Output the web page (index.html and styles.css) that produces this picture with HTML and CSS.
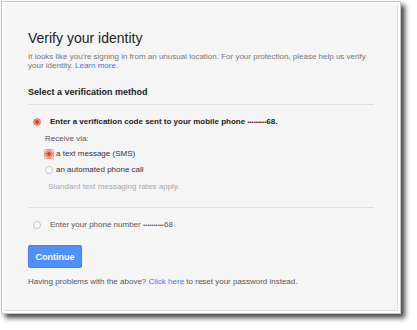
FILE: index.html
```html
<!DOCTYPE html>
<html>
<head>
<meta charset="utf-8">
<link rel="stylesheet" href="styles.css">
</head>
<body>
<div class="frame">
  <div class="card">
    <h1 class="title">Verify your identity</h1>
    <p class="intro">It looks like you're signing in from an unusual location. For your protection, please help us verify your identity. <a class="link" href="#">Learn more</a>.</p>
    <h2 class="section">Select a verification method</h2>
    <div class="rule"></div>
    <div class="option">
      <span class="radio checked"></span>
      <span class="opt-label bold">Enter a verification code sent to your mobile phone <span class="dots">•••••••••</span>68.</span>
    </div>
    <div class="sub">
      <div class="receive">Receive via:</div>
      <div class="choice">
        <span class="focus"><span class="radio checked"></span></span>
        <span class="choice-label">a text message (SMS)</span>
      </div>
      <div class="choice">
        <span class="focus plain"><span class="radio"></span></span>
        <span class="choice-label">an automated phone call</span>
      </div>
      <div class="note">Standard text messaging rates apply.</div>
    </div>
    <div class="rule rule2"></div>
    <div class="option option2">
      <span class="radio"></span>
      <span class="opt-label">Enter your phone number <span class="dots">••••••••••</span>68</span>
    </div>
    <button class="btn">Continue</button>
    <p class="help">Having problems with the above? <a class="link" href="#">Click here</a> to reset your password instead.</p>
  </div>
</div>
</body>
</html>
```
FILE: styles.css
```css
html, body {
  margin: 0;
  padding: 0;
  background: #ffffff;
}
body {
  font-family: "Liberation Sans", Arial, sans-serif;
  width: 417px;
  height: 330px;
  overflow: hidden;
}
.frame {
  margin: 1px;
  width: 400px;
  height: 313px;
  box-sizing: border-box;
  border: 1px solid #c4c4c4;
  background: #fcfcfc;
  padding: 2px;
  box-shadow: 4px 4px 5px rgba(0, 0, 0, 0.72);
}
.card {
  box-sizing: border-box;
  height: 100%;
  background: #f5f5f5;
  border-right: 1px solid #dedede;
  border-bottom: 1px solid #dedede;
  padding: 26px 23px 0 24px;
}
.title {
  margin: 0;
  font-size: 14px;
  line-height: 16px;
  font-weight: normal;
  color: #222;
}
.intro {
  margin: 5.5px 0 0;
  font-size: 8px;
  line-height: 9.5px;
  color: #777;
}
.link {
  color: #3b78e7;
  text-decoration: none;
}
.section {
  margin: 16.5px 0 0;
  font-size: 9px;
  line-height: 11px;
  font-weight: bold;
  color: #222;
}
.rule {
  height: 1px;
  background: #e0e0e0;
  margin-top: 6px;
}
.option {
  display: flex;
  align-items: center;
  margin-top: 12px;
  height: 10px;
}
.option .radio {
  margin-left: 5px;
  margin-right: 9px;
}
.opt-label {
  font-size: 8px;
  line-height: 10px;
  color: #555;
}
.opt-label.bold {
  font-weight: bold;
  color: #222;
}
.dots {
  font-size: 6px;
}
.radio {
  display: inline-block;
  box-sizing: border-box;
  width: 8px;
  height: 8px;
  border-radius: 50%;
  border: 1px solid #c4c4c4;
  background: #fff;
  flex: none;
}
.radio.checked {
  border-color: #e2785a;
  background: radial-gradient(circle, #cf4a2c 0 1.6px, #f29a7f 2.2px);
}
.sub {
  padding-left: 17px;
}
.receive {
  margin-top: 7px;
  font-size: 8px;
  line-height: 10px;
  color: #555;
}
.choice {
  display: flex;
  align-items: center;
  height: 12px;
  margin-top: 4px;
}
.focus {
  display: inline-flex;
  align-items: center;
  justify-content: center;
  box-sizing: border-box;
  width: 10px;
  height: 10px;
  border: 1px solid #f0a185;
  border-radius: 2px;
  background: #fbe3da;
  margin-left: -1px;
  margin-right: 2px;
}
.focus.plain {
  border-color: transparent;
  background: transparent;
}
.choice-label {
  font-size: 8px;
  line-height: 10px;
  color: #333;
}
.note {
  margin-top: 6px;
  margin-left: 3px;
  font-size: 8px;
  line-height: 10px;
  color: #a8a8a8;
}
.rule2 {
  margin-top: 15px;
}
.option2 {
  margin-top: 12px;
}
.btn {
  display: block;
  margin-top: 15px;
  width: 54px;
  height: 23px;
  box-sizing: border-box;
  border: 1px solid #3f86f2;
  border-radius: 2px;
  background: #4d90fe;
  color: #fff;
  font-family: "Liberation Sans", Arial, sans-serif;
  font-size: 9px;
  font-weight: bold;
  padding: 0;
}
.help {
  margin: 9px 0 0;
  font-size: 8px;
  line-height: 10px;
  color: #555;
}
```
